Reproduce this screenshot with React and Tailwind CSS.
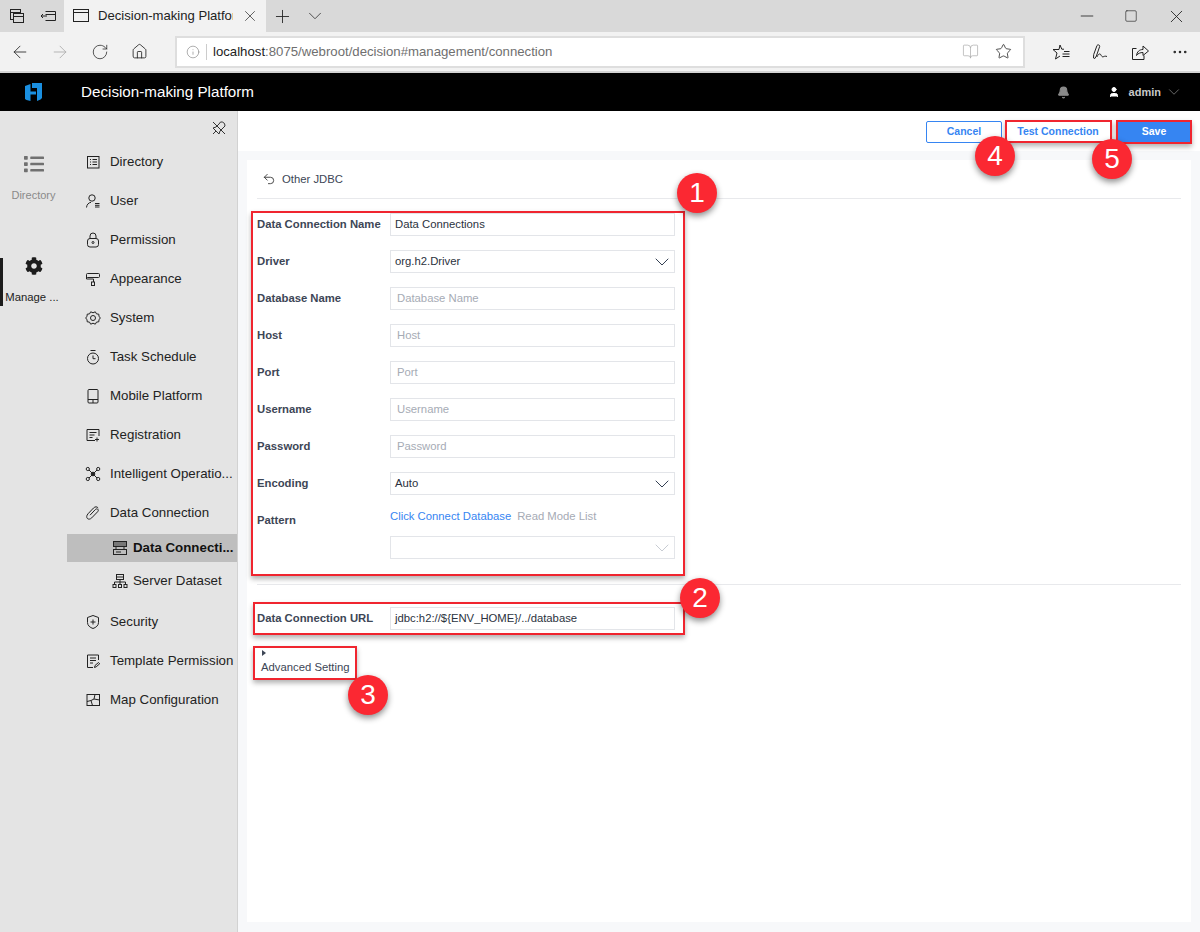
import { ArrowLeft, ArrowRight, RotateCw, House, Star, Info, X, Plus, ChevronDown, Minus, Square, Bell, User, MoreHorizontal, BookOpen, Undo2 } from 'lucide-react'
import { FaCog, FaList } from 'react-icons/fa'

// small outline icons for the side menu, drawn to a 16 box
const Svg = ({ children }) => (
  <svg width="16" height="16" viewBox="0 0 16 16" fill="none" stroke="#222" strokeWidth="1" className="shrink-0">{children}</svg>
)

const DirectoryIcon = () => (
  <Svg><rect x="2.500" y="2.500" width="11.500" height="11.500" /><path d="M5 5.500h1M7.500 5.500H12M5 8h1M7.500 8H12M5 10.500h1M7.500 10.500H12" /></Svg>
)
const UserIcon = () => (
  <Svg><circle cx="7" cy="5" r="3.200" /><path d="M1.500 14.500c.3-3 2-4.800 4.500-5.200M10 10.500h4.500M10 12.300h4.500M10 14h4.500" /></Svg>
)
const LockIcon = () => (
  <Svg><rect x="2.500" y="6.500" width="11" height="8.500" rx="2.500" /><path d="M5 6.500V4a3 3 0 0 1 6 0v2.500" /><circle cx="8" cy="10.500" r="1" /></Svg>
)
const RollerIcon = () => (
  <Svg><rect x="1.500" y="2.500" width="13" height="4" rx="1" /><path d="M1.500 4.500v3.500h7v3" /><rect x="6.500" y="11" width="3" height="3.500" /></Svg>
)
const GearIcon = () => (
  <Svg><path d="M5.700 1.800l2.300 1 2.300-1 1.200 2.100 2.300.3.200 2.400L15.500 8l-1.500 1.400-.2 2.400-2.300.3-1.200 2.100-2.300-1-2.300 1-1.200-2.100-2.300-.3L2 9.400.5 8 2 6.600l.2-2.400 2.300-.3z" /><circle cx="8" cy="8" r="2.500" /></Svg>
)
const TimerIcon = () => (
  <Svg><circle cx="8" cy="9.500" r="5.500" /><path d="M5.500 1.500h5M8 6.500v3.200h2.500" /></Svg>
)
const MobileIcon = () => (
  <Svg><rect x="3" y="1.500" width="10" height="13.500" rx="1" /><path d="M3 11.500h10M8 11.500v3.500" /></Svg>
)
const RegisterIcon = () => (
  <Svg><path d="M14 9V2.500H2v11h8" /><path d="M4.500 5.500h7M4.500 8h5M4.500 10.500h3M12 10.500v4M10 12.500h4" /></Svg>
)
const NodesIcon = () => (
  <Svg><path d="M4 4l8 8M12 4l-8 8" /><circle cx="2.800" cy="3" r="1.600" /><circle cx="13.200" cy="3" r="1.600" /><circle cx="2.800" cy="13" r="1.600" /><circle cx="13.200" cy="13" r="1.600" /><circle cx="8" cy="8" r="1.800" fill="#222" /></Svg>
)
const ClipIcon = () => (
  <Svg><path d="M13.200 3c-1.200-1.500-3-1.600-4.700 0L3 8.800c-1.600 1.900-1.600 3.700-.6 4.700s2.700.9 4.300-.6l6-6.200c.9-1.100.7-2-.1-2.600-.7-.5-1.600-.2-2.400.6L5 10.200" /></Svg>
)
const ServerIcon = () => (
  <Svg><rect x="1.500" y="1.500" width="13" height="5" fill="#777" /><rect x="1.500" y="9.500" width="13" height="5" /><path d="M4 6.500v3M12 6.500v3" /><path d="M4 12h5" /></Svg>
)
const TreeIcon = () => (
  <Svg><rect x="4.500" y="1.500" width="7" height="5" /><path d="M4.500 4h7M8 6.500V9M2.500 11V9h11v2M8 9v2" /><rect x="1" y="11.500" width="3" height="3" /><rect x="6.500" y="11.500" width="3" height="3" /><rect x="12" y="11.500" width="3" height="3" /></Svg>
)
const ShieldIcon = () => (
  <Svg><path d="M8 1.500l5.500 2v5c0 3-2.500 5-5.500 6-3-1-5.500-3-5.500-6v-5z" /><path d="M8 5.500v5M5.500 8h5" /></Svg>
)
const TemplateIcon = () => (
  <Svg><path d="M13.500 7V2H2.500v12.500H8" /><path d="M5 5h6M5 7.500h6M5 10h3M9.500 14.500l.5-2 3.500-3 1.200 1.300-3.500 3z" /></Svg>
)
const MapIcon = () => (
  <Svg><rect x="2" y="2.500" width="12.500" height="11" /><path d="M2 9.500l4-1 1.500 5M6 8.500l3-1.500 1-4.500M9 7l5.500 1" /></Svg>
)

const menu = [
  { label: 'Directory', Icon: DirectoryIcon },
  { label: 'User', Icon: UserIcon },
  { label: 'Permission', Icon: LockIcon },
  { label: 'Appearance', Icon: RollerIcon },
  { label: 'System', Icon: GearIcon },
  { label: 'Task Schedule', Icon: TimerIcon },
  { label: 'Mobile Platform', Icon: MobileIcon },
  { label: 'Registration', Icon: RegisterIcon },
  { label: 'Intelligent Operatio...', Icon: NodesIcon },
  { label: 'Data Connection', Icon: ClipIcon },
]

const menuAfter = [
  { label: 'Security', Icon: ShieldIcon },
  { label: 'Template Permission', Icon: TemplateIcon },
  { label: 'Map Configuration', Icon: MapIcon },
]

function MenuRow({ label, Icon }) {
  return (
    <div className="flex h-[39px] items-center pl-[18px] text-[#222]">
      <Icon />
      <span className="ml-[9px] whitespace-nowrap">{label}</span>
    </div>
  )
}

function Field({ label, value, placeholder, select, faint }) {
  return (
    <div className="flex h-[37px] items-center">
      <div className="w-[133px] shrink-0 font-bold text-[#3d4656]">{label}</div>
      <Box value={value} placeholder={placeholder} select={select} faint={faint} />
    </div>
  )
}

function Box({ value, placeholder, select, faint }) {
  return (
    <div className="flex h-[23px] w-[285px] items-center justify-between border border-[#e3e5e9] pl-[4px]">
      {value ? <span className="text-[#2b3240]">{value}</span> : <span className="pl-[2px] text-[#a6abb5]">{placeholder}</span>}
      {select && <ChevronDown size={24} strokeWidth={1} className={faint ? 'text-[#c8ccd3]' : 'text-[#333f52]'} />}
    </div>
  )
}

function RedBox({ className }) {
  return <div className={`pointer-events-none absolute border-2 border-[#f0252f] shadow-[0_3px_5px_rgba(0,0,0,0.3)] ${className}`} />
}

function Badge({ n, className }) {
  return (
    <div className={`absolute flex h-10 w-10 items-center justify-center rounded-full bg-[#fb2832] text-[28px] text-white shadow-[0_3px_6px_rgba(0,0,0,0.45)] ${className}`}>
      {n}
    </div>
  )
}

export default function App() {
  return (
    <div className="relative flex h-[932px] w-[1200px] flex-col overflow-hidden bg-white font-['Liberation_Sans',Arial,sans-serif]">
      {/* Browser tab strip */}
      <div className="flex h-8 shrink-0 items-center bg-[#d9d9d9] text-[#222]">
        <div className="flex w-[64px] items-center pl-[9px]">
          <svg width="16" height="16" viewBox="0 0 16 16" fill="none" stroke="#222"><rect x="1.500" y="1.500" width="10" height="10" fill="#d9d9d9" /><rect x="4.500" y="5.500" width="10" height="9" fill="#d9d9d9" /><path d="M4.500 8.500h10M1.500 4.500h10" /></svg>
          <svg className="ml-[15px]" width="17" height="16" viewBox="0 0 17 16" fill="none" stroke="#222"><path d="M5.500 3.500h10v9h-10M5.500 6.500h10M1 8h6M3 6L1 8l2 2" /></svg>
        </div>
        <div className="flex h-8 w-[202px] items-center bg-[#f2f2f2] pl-[9px]">
          <svg width="16" height="14" viewBox="0 0 16 14" fill="none" stroke="#222"><rect x="0.500" y="0.500" width="15" height="12" /><path d="M0.500 3.500h15" /></svg>
          <span className="ml-[9px] w-[135px] overflow-hidden whitespace-nowrap text-[13.100px]">Decision-making Platform</span>
          <X size={18} strokeWidth={1} className="ml-[8px] text-[#333]" />
        </div>
        <Plus size={21} strokeWidth={1} className="ml-[6px]" />
        <ChevronDown size={22} strokeWidth={1} className="ml-[11px] text-[#444]" />
        <div className="ml-auto flex items-center">
          <Minus size={20} strokeWidth={1} className="mr-[27px]" />
          <Square size={14} strokeWidth={1.100} className="mr-[28px]" />
          <X size={21} strokeWidth={1} className="mr-[13px]" />
        </div>
      </div>

      {/* Browser toolbar */}
      <div className="flex h-[41px] shrink-0 items-center border-b-2 border-[#d4d4d4] bg-[#f2f2f2] text-[#222]">
        <ArrowLeft size={20} strokeWidth={1} className="ml-[10px]" />
        <ArrowRight size={20} strokeWidth={1} className="ml-[20px] text-[#aaa]" />
        <RotateCw size={18} strokeWidth={1} className="ml-[21px]" />
        <House size={17} strokeWidth={1.200} className="ml-[22px]" />
        <div className="ml-[27px] flex h-8 w-[850px] items-center border-2 border-[#dedede] bg-white pl-[9px] pr-[11px] text-[13.200px]">
          <Info size={14} strokeWidth={1} className="text-[#777]" />
          <div className="ml-[6px] mr-[6px] h-[16px] w-px bg-[#ccc]" />
          <span className="text-[#222]">localhost</span>
          <span className="text-[#6f6f6f]">:8075/webroot/decision#management/connection</span>
          <BookOpen size={17} strokeWidth={1} className="ml-auto text-[#aaa]" />
          <Star size={17} strokeWidth={1.100} className="ml-[16px]" />
        </div>
        <svg className="ml-[27px]" width="18" height="18" viewBox="0 0 18 18" fill="none" stroke="#222"><path d="M8 2l1.800 4.200H12M1 6.500h6L8 2M1 6.500l4 3.500-1.500 6L8 13M12 8.500h5.500M10.500 11h7M10.500 13.500h7" /></svg>
        <svg className="ml-[22px]" width="18" height="18" viewBox="0 0 18 18" fill="none" stroke="#222"><path d="M1.500 15l.2-3.500L5 2.500c.6-1.200 3-.6 2.700.9L4.400 13 2.800 15.500zM4.800 14c1.400-2.800 3-3.800 3.800-2.600.8 1.300 1.500 3.200 3.200 2.200.9-.5 1.800-.6 3.200-.1" /></svg>
        <svg className="ml-[21px]" width="18" height="18" viewBox="0 0 18 18" fill="none" stroke="#222"><path d="M1.500 5.500v11h11.500v-4M1.500 5.500h4M5.500 12.500c.5-3.700 2.800-6 6.500-6V3l5.500 5-5.500 4.500v-3c-2.700 0-5 .8-6.500 3z" /></svg>
        <MoreHorizontal size={18} strokeWidth={1.400} className="ml-[22px]" />
      </div>

      {/* App header */}
      <div className="flex h-[38px] shrink-0 items-center bg-black text-white">
        <svg className="ml-[25px]" width="17" height="18" viewBox="0 0 17 18">
          <path fill="#1a8fe0" d="M0 3l5.500-2V8.500H11v3H5.500V18L1.500 17 0 16zM7 0H17V15l-1.500 1.500L12 18V5H7z" />
        </svg>
        <span className="ml-[39px] text-[15.200px]">Decision-making Platform</span>
        <Bell size={13} fill="#8a8a8a" className="ml-auto text-[#8a8a8a]" />
        <User size={12} fill="#fff" className="ml-[38px]" />
        <span className="ml-[9px] text-[11px] font-bold text-[#c8c8c8]">admin</span>
        <ChevronDown size={18} strokeWidth={1} className="ml-[4px] mr-[17px] text-[#888]" />
      </div>

      <div className="flex min-h-0 flex-1">
        {/* Icon rail */}
        <div className="flex w-[67px] shrink-0 flex-col items-center bg-[#e4e4e4] pt-[43px]">
          <FaList size={20} className="text-[#707070]" />
          <div className="mt-[13px] text-[11px] text-[#8a8a8a]">Directory</div>
          <div className="mt-[54px] flex h-[48px] w-full flex-col items-center border-l-[3px] border-[#1c1c1c] pr-[3px]">
            <FaCog size={22} className="-mt-[1px] text-[#1c1c1c]" />
            <div className="mr-[3px] mt-[14px] whitespace-nowrap text-[11.300px] text-[#222]">Manage ...</div>
          </div>
        </div>

        {/* Side menu */}
        <div className="relative w-[171px] shrink-0 border-r border-[#d2d2d2] bg-[#e4e4e4] text-[13.300px]">
          <div className="flex h-[31px] items-start justify-end pr-[11px] pt-[10px]">
            <svg width="14" height="14" viewBox="0 0 14 14" fill="none" stroke="#333"><path d="M8.500 1c2.500-.5 4.500 1 4.500 4l-2 2-3 3-1 3-6-6 3-1 3-3zM1 13l3-3M1 1l12 12" /></svg>
          </div>
          <div>
            {menu.map((m) => <MenuRow key={m.label} {...m} />)}
            <div className="mt-[2px] flex h-[28px] items-center bg-[#bebebe] pl-[45px] font-bold text-[#111]">
              <ServerIcon />
              <span className="ml-[5px] whitespace-nowrap">Data Connecti...</span>
            </div>
            <div className="flex h-[38px] items-center pl-[45px] text-[#222]">
              <TreeIcon />
              <span className="ml-[5px]">Server Dataset</span>
            </div>
            <div className="mt-[2px]">
              {menuAfter.map((m) => <MenuRow key={m.label} {...m} />)}
            </div>
          </div>
          <div className="absolute right-[-6px] top-[405px] h-[14px] w-[5px] bg-[radial-gradient(#888_0.7px,transparent_0.7px)] bg-[length:2px_2px]" />
        </div>

        {/* Content */}
        <div className="flex min-w-0 flex-1 flex-col bg-[#f7f8fa]">
          <div className="flex h-10 shrink-0 items-center justify-end gap-[4px] bg-white pr-[10px] pt-[2px] text-[10.500px] font-bold">
            <div className="flex h-[22px] w-[76px] items-center justify-center rounded-[2px] border border-[#3685f2] text-[#3685f2]">Cancel</div>
            <div className="flex h-[22px] w-[104px] items-center justify-center text-[#3685f2]">Test Connection</div>
            <div className="ml-[4px] flex h-[22px] w-[72px] items-center justify-center bg-[#3685f2] text-white">Save</div>
          </div>
          <div className="mx-[9px] mb-[10px] mt-[9px] flex-1 bg-white px-[10px] text-[11.300px]">
            <div className="flex h-[39px] items-center border-b border-[#e8e9ec] text-[#3d4656]">
              <Undo2 size={14} strokeWidth={1.500} className="ml-[5px] text-[#333]" />
              <span className="ml-[6px]">Other JDBC</span>
            </div>
            <div className="pt-[7px]">
              <Field label="Data Connection Name" value="Data Connections" />
              <Field label="Driver" value="org.h2.Driver" select />
              <Field label="Database Name" placeholder="Database Name" />
              <Field label="Host" placeholder="Host" />
              <Field label="Port" placeholder="Port" />
              <Field label="Username" placeholder="Username" />
              <Field label="Password" placeholder="Password" />
              <Field label="Encoding" value="Auto" select />
              <div className="flex">
                <div className="w-[133px] pt-[10px] font-bold text-[#3d4656]">Pattern</div>
                <div className="pt-[6px]">
                  <div className="flex h-[16px] items-center">
                    <span className="text-[#3685f2]">Click Connect Database</span>
                    <span className="ml-[6px] text-[#a6abb5]">Read Mode List</span>
                  </div>
                  <div className="mt-[12px]"><Box select faint /></div>
                </div>
              </div>
            </div>
            <div className="mt-[25px] border-t border-[#e8e9ec] pt-[15px]">
              <Field label="Data Connection URL" value="jdbc:h2://${ENV_HOME}/../database" />
            </div>
            <div className="pl-[4px] pt-[13px] text-[#3d4656]">
              <div className="ml-[1px] h-0 w-0 border-y-[3px] border-l-[4px] border-y-transparent border-l-[#3d4656]" />
              <div className="mt-[3px]">Advanced Setting</div>
            </div>
          </div>
        </div>
      </div>

      {/* Tutorial annotations */}
      <RedBox className="left-[251px] top-[211px] h-[365px] w-[434px]" />
      <RedBox className="left-[253px] top-[602px] h-[33px] w-[432px]" />
      <RedBox className="left-[253px] top-[646px] h-[34px] w-[104px]" />
      <RedBox className="left-[1005px] top-[120px] h-[23px] w-[107px]" />
      <RedBox className="left-[1116px] top-[120px] h-[24px] w-[76px]" />
      <Badge n="1" className="left-[677px] top-[173px]" />
      <Badge n="2" className="left-[680px] top-[578px]" />
      <Badge n="3" className="left-[348px] top-[675px]" />
      <Badge n="4" className="left-[975px] top-[136px]" />
      <Badge n="5" className="left-[1092px] top-[139px]" />
    </div>
  )
}
